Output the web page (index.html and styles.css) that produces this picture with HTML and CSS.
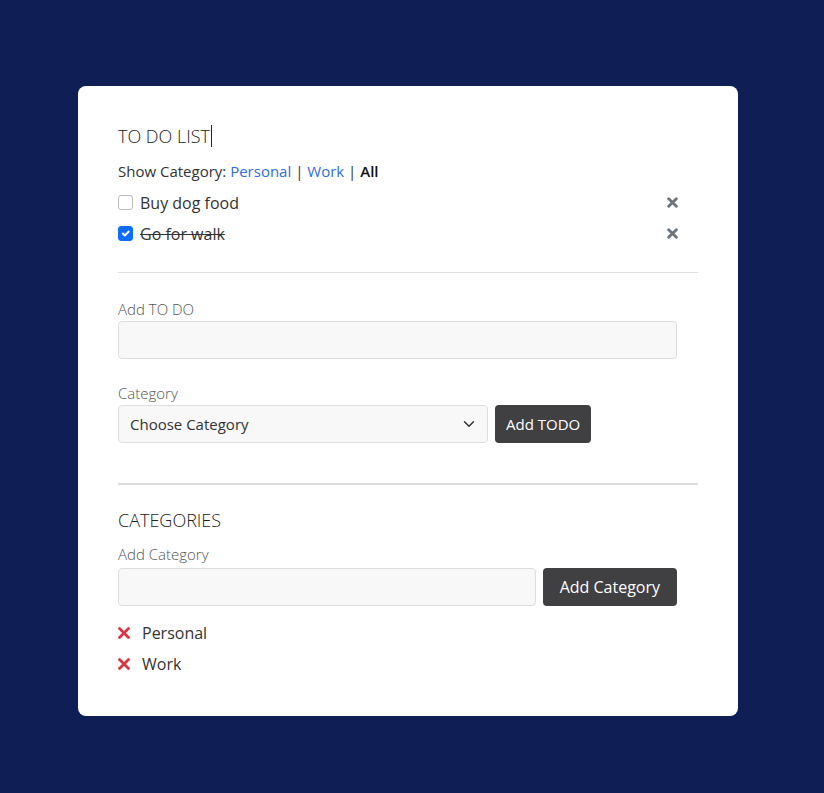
FILE: index.html
```html
<!DOCTYPE html>
<html lang="en">
<head>
  <meta charset="UTF-8" />
  <meta name="viewport" content="width=device-width, initial-scale=1.0"/>
  <title>To Do List</title>
  <link rel="stylesheet" href="styles.css">
</head>
<body>

<div class="card">
  <h1 class="title">TO DO LIST<span class="caret"></span></h1>

  <div class="filter">
    Show Category:
    <a href="#">Personal</a> <span class="sep">|</span>
    <a href="#">Work</a> <span class="sep">|</span>
    <b>All</b>
  </div>

  <ul class="todos">
    <li>
      <label><input type="checkbox" class="check"> Buy dog food</label>
      <svg class="remove" viewBox="0 0 10 10"><path d="M1.5 1.5l7 7M8.5 1.5l-7 7"/></svg>
    </li>
    <li class="done">
      <label><input type="checkbox" class="check" checked> <s>Go for walk</s></label>
      <svg class="remove" viewBox="0 0 10 10"><path d="M1.5 1.5l7 7M8.5 1.5l-7 7"/></svg>
    </li>
  </ul>

  <hr>

  <div class="form">
    <label class="field-label">Add TO DO</label>
    <input type="text" class="field">

    <label class="field-label second">Category</label>
    <div class="row">
      <select class="field select">
        <option>Choose Category</option>
      </select>
      <button class="btn">Add TODO</button>
    </div>
  </div>

  <hr class="thick">

  <h2 class="subtitle">CATEGORIES</h2>
  <div class="form">
    <label class="field-label cat-label">Add Category</label>
    <div class="row">
      <input type="text" class="field grow">
      <button class="btn big">Add Category</button>
    </div>
  </div>

  <ul class="cats">
    <li><svg class="del" viewBox="0 0 12 12"><path d="M1.5 1.5l9 9M10.5 1.5l-9 9"/></svg> Personal</li>
    <li><svg class="del" viewBox="0 0 12 12"><path d="M1.5 1.5l9 9M10.5 1.5l-9 9"/></svg> Work</li>
  </ul>
</div>

</body>
</html>
```

FILE: styles.css
```css
body {
  margin: 0;
  font-family: 'Open Sans', sans-serif;
  background: #0f1f55;
  color: #333;
  padding: 86px 0 60px 78px;
}

.card {
  width: 580px;
  background: white;
  border-radius: 8px;
  padding: 36px 40px 37px 40px;
}

.title {
  margin: 0 0 11px 0;
  font-size: 18px;
  font-weight: 300;
  color: #222;
  line-height: 28px;
  display: flex;
  align-items: center;
}

.caret {
  display: inline-block;
  width: 1px;
  height: 22px;
  background: #222;
  margin-left: 1px;
}

.filter {
  font-size: 15px;
  color: #333;
  line-height: 20px;
}

.filter a {
  color: #2f6ee0;
  text-decoration: none;
  font-weight: 500;
}

.filter .sep {
  color: #333;
}

.filter b {
  font-weight: 600;
  color: #111;
}

.todos {
  list-style: none;
  margin: 6px 0 0 0;
  padding: 0;
}

.todos li {
  display: flex;
  justify-content: space-between;
  align-items: center;
  height: 31px;
  font-size: 16px;
}

.todos label {
  display: flex;
  align-items: center;
  gap: 7px;
}

.check {
  appearance: none;
  width: 15px;
  height: 15px;
  margin: 0;
  border: 1px solid #bbb;
  border-radius: 3px;
  background: white;
}

.check:checked {
  border-color: #0d6efd;
  background: #0d6efd url("data:image/svg+xml,%3Csvg xmlns='http://www.w3.org/2000/svg' viewBox='0 0 20 20'%3E%3Cpath fill='none' stroke='%23fff' stroke-linecap='round' stroke-linejoin='round' stroke-width='3' d='M6 10l3 3 6-6'/%3E%3C/svg%3E") center / 100% no-repeat;
}

.todos s {
  color: #333;
}

.remove {
  width: 11px;
  height: 11px;
  margin-right: 20px;
  stroke: #6c757d;
  stroke-width: 2.6;
  stroke-linecap: round;
  fill: none;
}

hr {
  border: none;
  border-top: 1px solid #ddd;
  margin: 23px 0 26px 0;
}

hr.thick {
  border-top: 2px solid #ddd;
  margin: 40px 0 23px 0;
}

.form {
  width: 559px;
}

.field-label {
  display: block;
  font-size: 15px;
  font-weight: 300;
  color: #555;
  line-height: 20px;
  margin-bottom: 2px;
}

.field-label.second {
  margin-top: 24px;
}

.field-label.cat-label {
  margin-bottom: 4px;
}

.field {
  box-sizing: border-box;
  display: block;
  width: 100%;
  height: 38px;
  background: #f8f8f8;
  border: 1px solid #ddd;
  border-radius: 4px;
  font-family: inherit;
  font-size: 15px;
  color: #333;
  padding: 0 11px;
}

.row {
  display: flex;
  gap: 7px;
}

.select {
  width: 370px;
  appearance: none;
  background-image: url("data:image/svg+xml,%3Csvg xmlns='http://www.w3.org/2000/svg' viewBox='0 0 16 16'%3E%3Cpath fill='none' stroke='%23333' stroke-linecap='round' stroke-linejoin='round' stroke-width='2' d='M2 5l6 6 6-6'/%3E%3C/svg%3E");
  background-repeat: no-repeat;
  background-position: right 12px center;
  background-size: 12px 12px;
}

.grow {
  flex: 1;
  width: auto;
}

.btn {
  background: #404043;
  color: white;
  border: none;
  border-radius: 4px;
  font-family: inherit;
  font-size: 15px;
  font-weight: 500;
  padding: 0 11px;
  height: 38px;
}

.btn.big {
  font-size: 16px;
  padding: 0 17px;
}

.subtitle {
  margin: 0 0 12px 0;
  font-size: 18px;
  font-weight: 300;
  color: #222;
  line-height: 24px;
}

.cats {
  list-style: none;
  margin: 11px 0 0 0;
  padding: 0;
}

.cats li {
  display: flex;
  align-items: center;
  height: 31px;
  font-size: 16px;
}

.del {
  width: 12px;
  height: 12px;
  margin-right: 12px;
  stroke: #dc3545;
  stroke-width: 2.8;
  stroke-linecap: round;
  fill: none;
}
```
